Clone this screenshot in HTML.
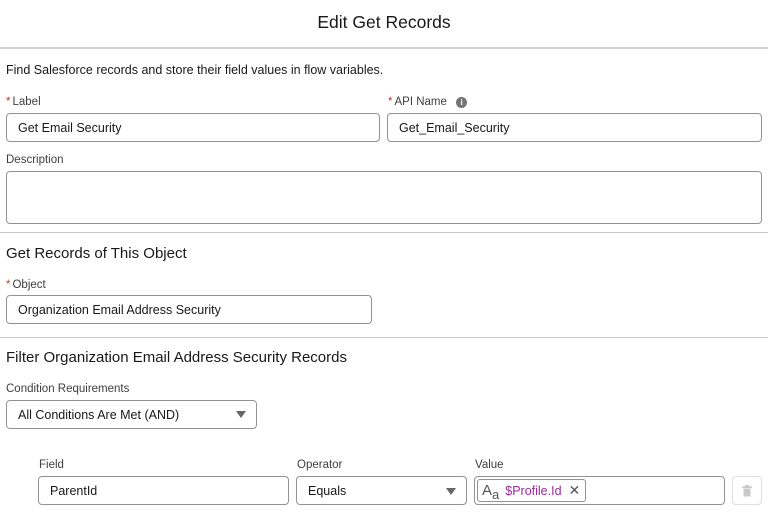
<!DOCTYPE html>
<html><head><style>
body{margin:0;width:768px;height:513px;background:#fff;font-family:"Liberation Sans",sans-serif;color:#181818;position:relative;overflow:hidden}
.a{position:absolute;white-space:nowrap}
.lbl{font-size:11.5px;color:#3e3e3c}
.req{color:#c23934;margin-right:2px}
.in{position:absolute;border:1px solid #939393;border-radius:4px;box-sizing:border-box;font-size:12.5px;padding-left:11px;display:flex;align-items:center;background:#fff}
.sep{position:absolute;left:0;width:768px;height:1px;background:#c9c9c9}
.h{font-size:15px;color:#181818}
.arr{position:absolute;width:0;height:0;border-left:5px solid transparent;border-right:5px solid transparent;border-top:7px solid #666}
</style></head><body>
<div class="a" style="left:0;width:768px;text-align:center;top:12px;font-size:17.5px">Edit Get Records</div>
<div class="sep" style="top:47px;height:2px;background:#d0d0d0"></div>
<div class="a" style="left:6px;top:63px;font-size:12.5px">Find Salesforce records and store their field values in flow variables.</div>
<div class="a lbl" style="left:6px;top:96px"><span class="req">*</span>Label</div>
<div class="a lbl" style="left:388px;top:96px"><span class="req">*</span>API Name <span style="display:inline-block;width:11px;height:11px;border-radius:50%;background:#747474;color:#fff;font-size:8px;text-align:center;line-height:11px;margin-left:6px;font-weight:bold;vertical-align:0px">i</span></div>
<div class="in" style="left:6px;top:113px;width:374px;height:29px">Get Email Security</div>
<div class="in" style="left:387px;top:113px;width:375px;height:29px">Get_Email_Security</div>
<div class="a lbl" style="left:6px;top:154px">Description</div>
<div class="in" style="left:6px;top:171px;width:756px;height:53px"></div>
<div class="sep" style="top:232px"></div>
<div class="a h" style="left:6px;top:245px">Get Records of This Object</div>
<div class="a lbl" style="left:6px;top:279px"><span class="req">*</span>Object</div>
<div class="in" style="left:6px;top:295px;width:366px;height:29px">Organization Email Address Security</div>
<div class="sep" style="top:337px"></div>
<div class="a h" style="left:6px;top:349px">Filter Organization Email Address Security Records</div>
<div class="a lbl" style="left:6px;top:383px">Condition Requirements</div>
<div class="in" style="left:6px;top:400px;width:251px;height:29px">All Conditions Are Met (AND)</div>
<div class="arr" style="left:236px;top:411px"></div>
<div class="a lbl" style="left:39px;top:459px">Field</div>
<div class="a lbl" style="left:297px;top:459px">Operator</div>
<div class="a lbl" style="left:475px;top:459px">Value</div>
<div class="in" style="left:38px;top:476px;width:251px;height:29px">ParentId</div>
<div class="in" style="left:296px;top:476px;width:171px;height:29px">Equals</div>
<div class="arr" style="left:446px;top:488px"></div>
<div class="in" style="left:474px;top:476px;width:251px;height:29px;padding-left:2px">
<div style="border:1px solid #939393;border-radius:3px;height:23px;box-sizing:border-box;display:flex;align-items:center;padding:0 5px 0 4px;font-size:12.5px">
<span style="font-size:15px;color:#555">A</span><span style="font-size:13px;color:#555;position:relative;top:4px;margin-right:6px">a</span><span style="color:#9c2a9b">$Profile.Id</span><span style="margin-left:7px;color:#555;font-size:14px">✕</span></div></div>
<div class="in" style="left:732px;top:476px;width:30px;height:29px;border-color:#ddd;padding:0;justify-content:center">
<svg width="10" height="12" viewBox="0 0 10 12"><rect x="0" y="1.5" width="10" height="1.5" fill="#c9c9c9"/><rect x="3" y="0" width="4" height="2" fill="#c9c9c9"/><rect x="1.5" y="3.5" width="7" height="8" fill="#c9c9c9"/></svg></div>
</body></html>
